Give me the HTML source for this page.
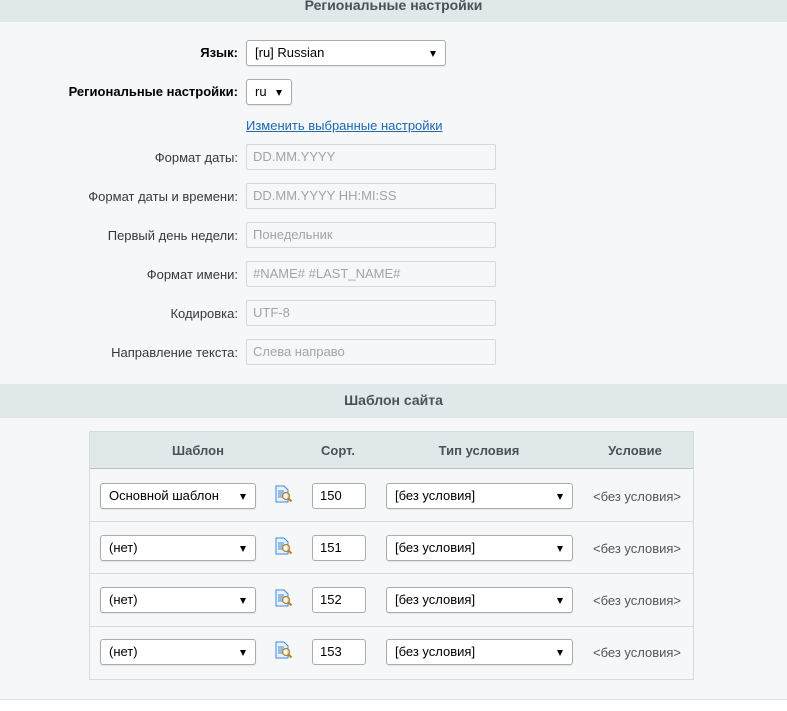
<!DOCTYPE html>
<html><head><meta charset="utf-8"><style>
*{box-sizing:border-box;margin:0;padding:0}
body{width:787px;height:711px;background:#f5f7f8;font-family:"Liberation Sans",Arial,sans-serif;font-size:13px;color:#000;position:relative;overflow:hidden}
.a{position:absolute}
.hd{position:absolute;left:0;width:787px;background:#e0e8ea;font-weight:bold;color:#4b5256;text-align:center;font-size:14px}
.lbl{position:absolute;right:549px;text-align:right;white-space:nowrap}
.b{font-weight:bold;color:#000}
.g{color:#333a3e}
.sel{position:absolute;background:#fff;border:1px solid #a8adaf;border-radius:3px;height:26px;line-height:24px;padding-left:8px;box-shadow:0 1px 1px rgba(0,0,0,.08)}
.sel:after{content:"";position:absolute;right:9px;top:10px;border-left:3.5px solid transparent;border-right:3.5px solid transparent;border-top:6px solid #000}
.inp{position:absolute;left:246px;width:250px;height:26px;border:1px solid #d4d9db;border-radius:2px;background:#f5f7f8;color:#a0a5a8;line-height:24px;padding-left:6px}
.num{position:absolute;left:312px;width:54px;height:26px;border:1px solid #a8adaf;border-radius:3px;background:#fff;line-height:24px;padding-left:7px}
.th{position:absolute;top:443px;font-weight:bold;color:#4b5256;transform:translateX(-50%)}
.cond{position:absolute;left:593px;color:#555}
.hl{position:absolute;left:89px;width:605px;height:1px;background:#d5dcde}
</style></head><body>
<div class="hd" style="top:0;height:22px;line-height:10px">Региональные настройки</div>

<div class="lbl b" style="top:45px">Язык:</div>
<div class="sel" style="left:246px;top:40px;width:200px">[ru] Russian</div>
<div class="lbl b" style="top:84px">Региональные настройки:</div>
<div class="sel" style="left:246px;top:79px;width:46px">ru</div>
<div class="a" style="left:246px;top:118px;color:#2067b0;text-decoration:underline">Изменить выбранные настройки</div>

<div class="lbl g" style="top:150px">Формат даты:</div><div class="inp" style="top:144px">DD.MM.YYYY</div>
<div class="lbl g" style="top:189px">Формат даты и времени:</div><div class="inp" style="top:183px">DD.MM.YYYY HH:MI:SS</div>
<div class="lbl g" style="top:228px">Первый день недели:</div><div class="inp" style="top:222px">Понедельник</div>
<div class="lbl g" style="top:267px">Формат имени:</div><div class="inp" style="top:261px">#NAME# #LAST_NAME#</div>
<div class="lbl g" style="top:306px">Кодировка:</div><div class="inp" style="top:300px">UTF-8</div>
<div class="lbl g" style="top:345px">Направление текста:</div><div class="inp" style="top:339px">Слева направо</div>

<div class="hd" style="top:384px;height:34px;line-height:33px">Шаблон сайта</div>

<div class="a" style="left:89px;top:431px;width:605px;height:249px;border:1px solid #d5dcde;background:#f5f7f8"></div>
<div class="a" style="left:90px;top:432px;width:603px;height:37px;background:#e0e8ea;border-bottom:1px solid #b8c0c3"></div>
<div class="th" style="left:198px">Шаблон</div>
<div class="th" style="left:338px">Сорт.</div>
<div class="th" style="left:479px">Тип условия</div>
<div class="th" style="left:635px">Условие</div>
<div class="hl" style="top:521px"></div>
<div class="hl" style="top:573px"></div>
<div class="hl" style="top:626px"></div>

<svg width="0" height="0" style="position:absolute"><defs><g id="ic">
<path d="M1 1h8l4 4v12H1z" fill="#e8f2fc" stroke="#3a8ad8" stroke-width="1"/>
<path d="M3 6h6M3 8h6M3 10h4M3 12h4" stroke="#3a8ad8" stroke-width="1"/>
<circle cx="11" cy="11" r="3.5" fill="#fff8e0" fill-opacity=".6" stroke="#b9802a" stroke-width="1.3"/>
<path d="M13.5 13.5l3 3" stroke="#b9802a" stroke-width="2"/>
</g></defs></svg>

<div class="sel" style="left:100px;top:483px;width:156px">Основной шаблон</div>
<svg class="a" style="left:275px;top:485px" width="18" height="18"><use href="#ic"/></svg>
<div class="num" style="top:483px">150</div>
<div class="sel" style="left:386px;top:483px;width:187px">[без условия]</div>
<div class="cond" style="top:489px">&lt;без условия&gt;</div>

<div class="sel" style="left:100px;top:535px;width:156px">(нет)</div>
<svg class="a" style="left:275px;top:537px" width="18" height="18"><use href="#ic"/></svg>
<div class="num" style="top:535px">151</div>
<div class="sel" style="left:386px;top:535px;width:187px">[без условия]</div>
<div class="cond" style="top:541px">&lt;без условия&gt;</div>

<div class="sel" style="left:100px;top:587px;width:156px">(нет)</div>
<svg class="a" style="left:275px;top:589px" width="18" height="18"><use href="#ic"/></svg>
<div class="num" style="top:587px">152</div>
<div class="sel" style="left:386px;top:587px;width:187px">[без условия]</div>
<div class="cond" style="top:593px">&lt;без условия&gt;</div>

<div class="sel" style="left:100px;top:639px;width:156px">(нет)</div>
<svg class="a" style="left:275px;top:641px" width="18" height="18"><use href="#ic"/></svg>
<div class="num" style="top:639px">153</div>
<div class="sel" style="left:386px;top:639px;width:187px">[без условия]</div>
<div class="cond" style="top:645px">&lt;без условия&gt;</div>

<div class="a" style="left:0;top:699px;width:787px;height:12px;background:#fff;border-top:1px solid #dfe5e7"></div>
</body></html>
